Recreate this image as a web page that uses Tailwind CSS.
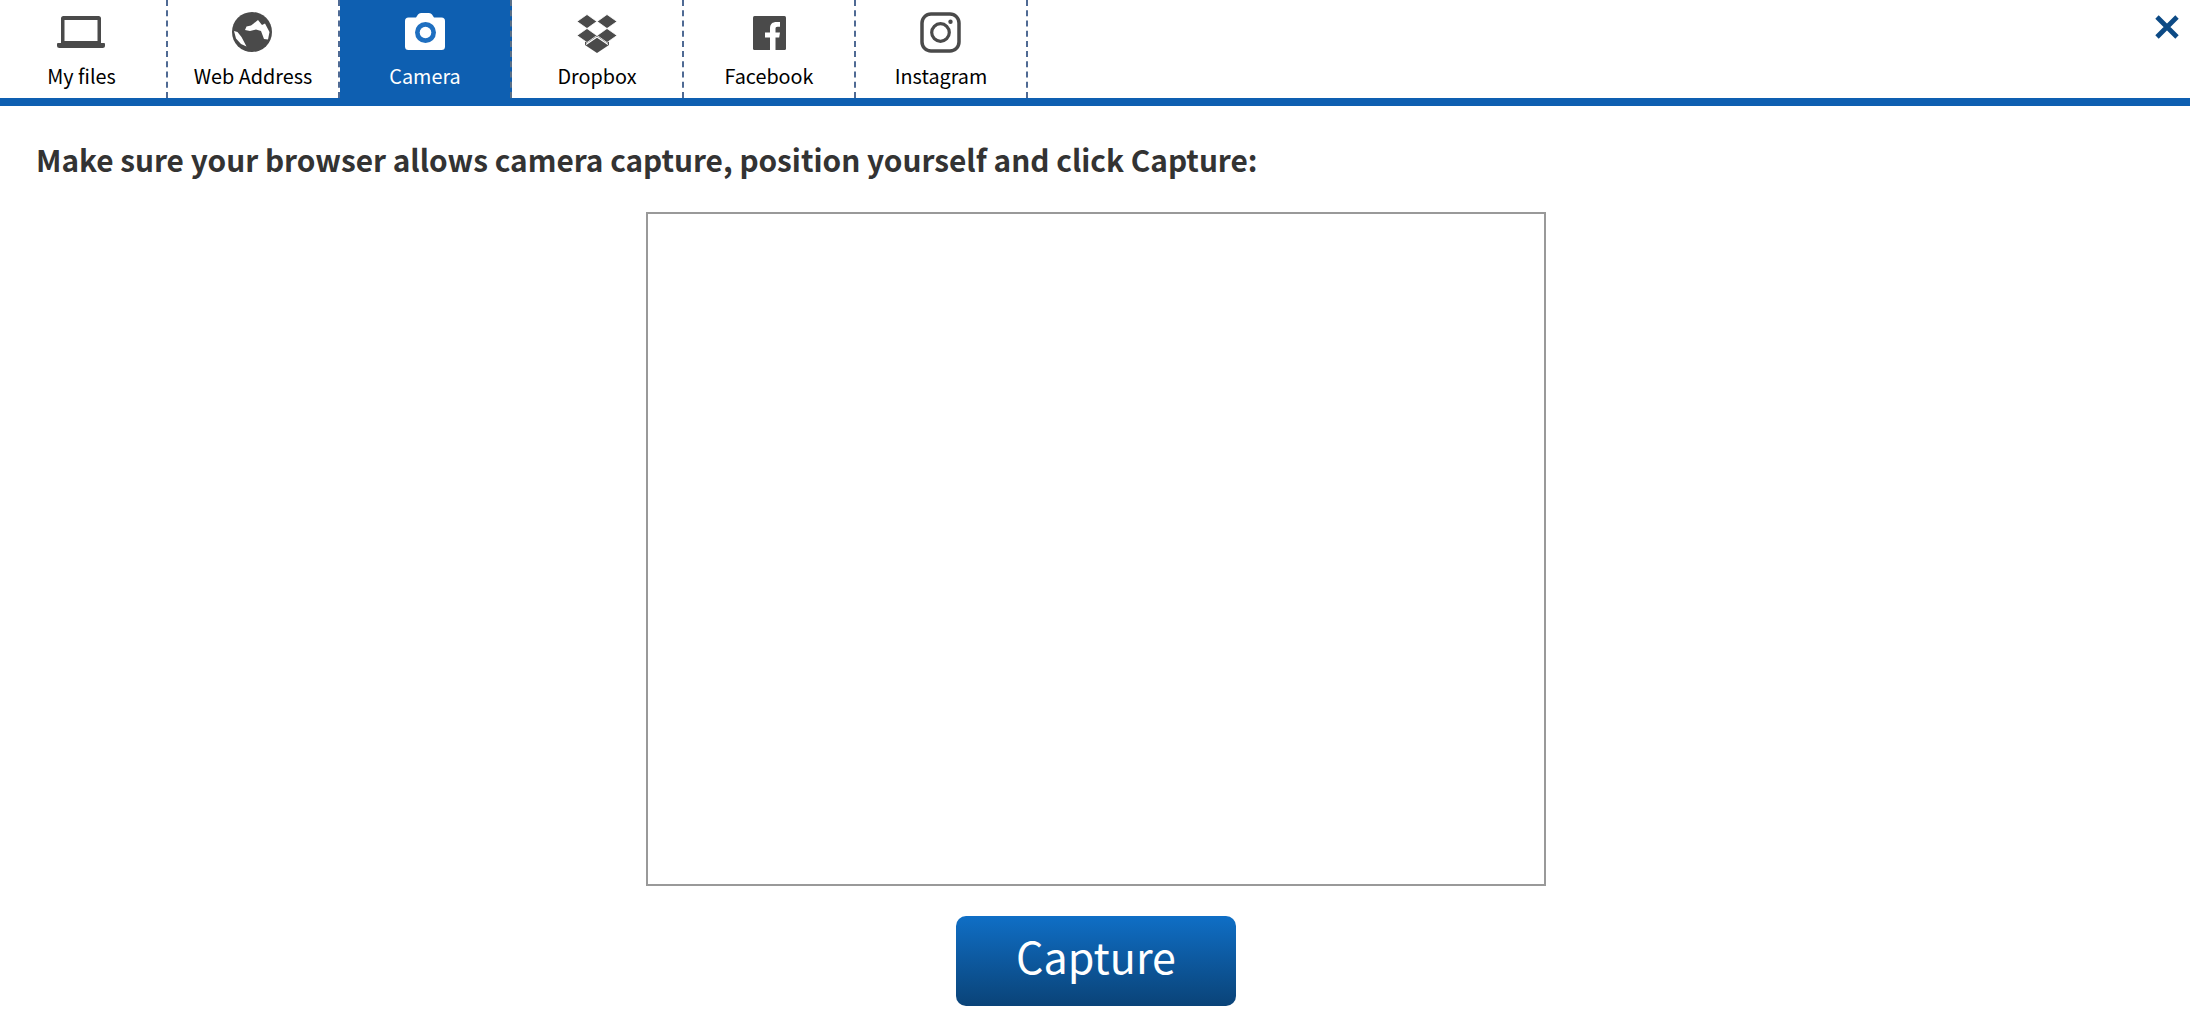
<!DOCTYPE html>
<html><head><meta charset="utf-8"><script src="https://cdn.jsdelivr.net/npm/@tailwindcss/browser@4"></script></head>
<body class="bg-white overflow-hidden">
<div class="relative w-[2190px] h-[1034px] font-['Noto_Sans_CJK_SC','Noto_Sans',sans-serif]">
<div class="flex h-[106px] border-b-[8px] border-[#0e5fb1]">
  <div class="w-[168px] h-[98px] flex flex-col items-center border-r-2 border-dashed border-[#4f6a94] text-black pr-[3px]">
    <svg class="mt-[16px] -ml-[2px] h-[32px] w-[48px]" viewBox="0 0 48 32" fill="#4a4a4a"><path d="M4 2.500A2.500 2.500 0 0 1 6.500 0h35A2.500 2.500 0 0 1 44 2.500V27H4zM7.500 4V25h33V4z" fill-rule="evenodd"/><path d="M1 27h46a1 1 0 0 1 1 1v1.500A2.500 2.500 0 0 1 45.500 32h-43A2.500 2.500 0 0 1 0 29.500V28a1 1 0 0 1 1-1z"/></svg>
    <span class="mt-auto mb-[9px] text-[19.8px] leading-[26px]">My files</span>
  </div>
  <div class="w-[172px] h-[98px] flex flex-col items-center border-r-2 border-dashed border-[#4f6a94] text-black">
    <svg class="mt-[12px] -ml-[2px] h-[40px] w-[40px]" viewBox="0 0 40 40"><circle cx="20" cy="20" r="20" fill="#4a4a4a"/><path d="M2 19l3.500 1 4 5 5 9.500-5.500-2.500-5-5.500zM13 18l1.500-3.500 4.500-1 2-1.500 5-4 4 5 3-1.500 4.500 8.500-1.500 7.500-4-.5-3-8-5-1.500-6 1.500z" fill="#fff"/></svg>
    <span class="mt-auto mb-[9px] text-[19.8px] leading-[26px]">Web Address</span>
  </div>
  <div class="w-[172px] h-[98px] flex flex-col items-center bg-[#0e5fb1] text-white border-r-2 border-dashed border-[#5a7088]">
    <svg class="mt-[13px] h-[37px] w-[40px]" viewBox="0 0 40 37"><path d="M3.500 4.500h7.500l2-3Q14 0 16 0h8q2 0 3 1.500l2 3h7.500q3.500 0 3.500 3.500v25.500q0 3.500-3.500 3.500h-33Q0 37 0 33.500V8q0-3.500 3.500-3.500z" fill="#fff"/><circle cx="20.500" cy="19.500" r="10.500" fill="#1f6fc0"/><circle cx="20.500" cy="19.500" r="5.800" fill="#fff"/></svg>
    <span class="mt-auto mb-[9px] text-[19.8px] leading-[26px]">Camera</span>
  </div>
  <div class="w-[172px] h-[98px] flex flex-col items-center border-r-2 border-dashed border-[#4f6a94] text-black">
    <svg class="mt-[14px] -ml-[1px] h-[39px] w-[40px]" viewBox="0 0 40 39" fill="#4a4a4a"><path d="M8 27l12-6 12 6v4l-12 8-12-8z"/><path d="M10 0.500l9.800 7-9.800 7-10-7zM30 0.500l10 7-10 7-9.800-7zM10 14.500l9.800 7-9.800 7-10-7zM30 14.500l10 7-10 7-9.800-7z" stroke="#fff" stroke-width="0.800"/><path d="M20 23l11 7.500M20 23L9 30.500" fill="none" stroke="#fff" stroke-width="1.200"/></svg>
    <span class="mt-auto mb-[9px] text-[19.8px] leading-[26px]">Dropbox</span>
  </div>
  <div class="w-[172px] h-[98px] flex flex-col items-center border-r-2 border-dashed border-[#4f6a94] text-black">
    <svg class="mt-[16px] h-[34px] w-[33px]" viewBox="0 0 33 34"><rect width="33" height="34" rx="1.500" fill="#4a4a4a"/><path d="M17 34V21.500h-5v-5h5V12.500C17 8 19.500 6 23.500 6H27v4.800h-2.500C23 10.800 22.500 11.500 22.500 13v3.500H27l-.8 5h-3.700V34z" fill="#fff"/></svg>
    <span class="mt-auto mb-[9px] text-[19.8px] leading-[26px]">Facebook</span>
  </div>
  <div class="w-[172px] h-[98px] flex flex-col items-center border-r-2 border-dashed border-[#4f6a94] text-black">
    <svg class="mt-[12px] -ml-[2px] h-[41px] w-[41px]" viewBox="0 0 41 41" fill="none" stroke="#4a4a4a"><rect x="2" y="2" width="37" height="37" rx="9" stroke-width="3.500"/><circle cx="20.500" cy="20.500" r="8.800" stroke-width="3.200"/><circle cx="30.500" cy="9.800" r="2.200" fill="#4a4a4a" stroke="none"/></svg>
    <span class="mt-auto mb-[9px] text-[19.8px] leading-[26px]">Instagram</span>
  </div>
  <svg class="absolute left-[2155px] top-[15px] h-[24px] w-[24px]" viewBox="0 0 24 24" fill="none" stroke="#0c4a85" stroke-width="4.800"><path d="M2 2l20 20M22 2L2 22"/></svg>
</div>
<h1 class="ml-[36px] mt-[33px] text-[29.8px] leading-[40px] font-semibold text-[#333]">Make sure your browser allows camera capture, position yourself and click Capture:</h1>
<div class="mt-[33px] flex justify-center pl-[2px]">
  <div class="w-[900px] h-[674px] border-2 border-[#999]"></div>
</div>
<div class="mt-[30px] flex justify-center pl-[2px]">
  <button class="w-[280px] h-[90px] pb-[12px] rounded-[10px] bg-gradient-to-b from-[#0f6fc6] to-[#0a4378] text-white text-[43px] leading-[60px]">Capture</button>
</div>
</div>
</body></html>
